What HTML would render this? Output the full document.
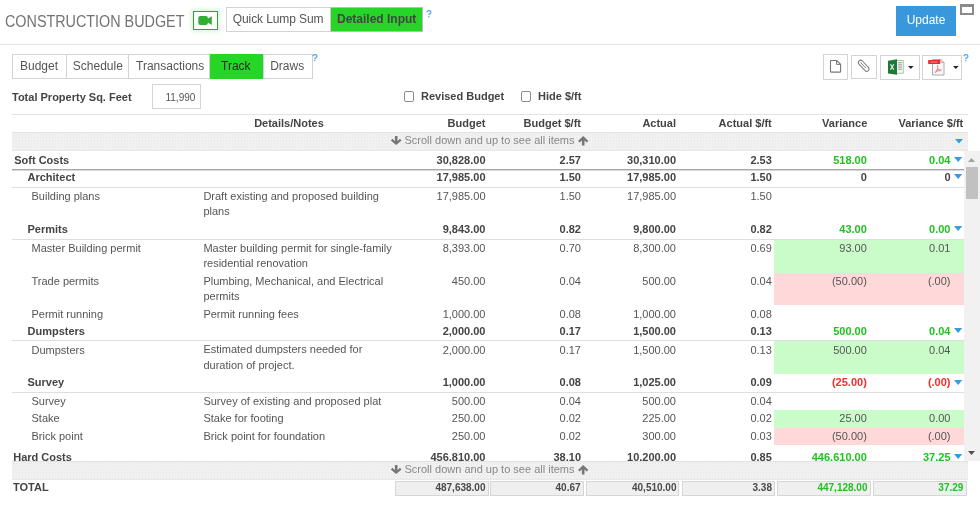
<!DOCTYPE html>
<html><head><meta charset="utf-8"><style>
html,body{margin:0;padding:0;}
body{width:980px;height:509px;position:relative;overflow:hidden;background:#fff;font-family:"Liberation Sans", sans-serif;}
#w{position:absolute;left:0;top:0;width:980px;height:509px;will-change:transform;}
</style></head><body>
<div id="w">
<div style="position:absolute;left:4.8px;top:13.96px;font-size:16px;line-height:16px;font-weight:400;color:#737373;white-space:nowrap;transform:scaleX(0.897);transform-origin:0 0;">CONSTRUCTION BUDGET</div>
<div style="position:absolute;left:193px;top:11px;width:25px;height:19px;box-sizing:border-box;border:1px solid #2ba82b;box-shadow:0 0 4px 2px #dcf7dc;background:#fff;"></div>
<svg style="position:absolute;left:197px;top:15px" width="16" height="12" viewBox="0 0 16 12"><rect x="1.3" y="1" width="9.6" height="9.1" rx="2" fill="#33ad33"/><path d="M10 4 L14.8 1.2 V10 L10 7.1 Z" fill="#33ad33"/></svg>
<div style="position:absolute;left:226px;top:7px;width:197px;height:25px;box-sizing:border-box;border:1px solid #d3d3d3;background:#fff;"></div>
<div style="position:absolute;left:331px;top:7px;width:92px;height:25px;box-sizing:border-box;background:#26d626;border:1px solid #bbb;border-left:none;"></div>
<div style="position:absolute;left:330px;top:7px;width:1px;height:25px;background:#ccc;"></div>
<div style="position:absolute;left:232.8px;top:12.54px;font-size:12px;line-height:12px;font-weight:400;color:#555;white-space:nowrap;letter-spacing:-0.1px;">Quick Lump Sum</div>
<div style="position:absolute;left:337px;top:12.54px;font-size:12px;line-height:12px;font-weight:700;color:#444;white-space:nowrap;">Detailed Input</div>
<svg style="position:absolute;left:425.5px;top:9.6px" width="6" height="8" viewBox="0 0 6 8"><path d="M0.9 2.3 Q1 0.6 2.9 0.6 Q4.9 0.6 4.9 2.2 Q4.9 3.2 3.7 3.9 Q2.8 4.4 2.8 5.2" fill="none" stroke="#5aa9e4" stroke-width="1.3"/><circle cx="2.8" cy="6.7" r="0.8" fill="#5aa9e4"/></svg>
<div style="position:absolute;left:896px;top:6px;width:60px;height:30px;background:#3898db;"></div>
<div style="position:absolute;left:726px;width:400px;text-align:center;top:14.34px;font-size:12px;line-height:12px;font-weight:400;color:#fff;white-space:nowrap;">Update</div>
<div style="position:absolute;left:960px;top:4px;width:14px;height:11px;box-sizing:border-box;border:2px solid #8a8a8a;border-top:3px solid #8a8a8a;"></div>
<div style="position:absolute;left:0px;top:44px;width:980px;height:1px;background:#e6e6e6;"></div>
<div style="position:absolute;left:12px;top:54px;width:301px;height:25px;box-sizing:border-box;border:1px solid #d3d3d3;background:#fff;"></div>
<div style="position:absolute;left:66px;top:54px;width:1px;height:25px;background:#d3d3d3;"></div>
<div style="position:absolute;left:128px;top:54px;width:1px;height:25px;background:#d3d3d3;"></div>
<div style="position:absolute;left:209px;top:54px;width:1px;height:25px;background:#d3d3d3;"></div>
<div style="position:absolute;left:263px;top:54px;width:1px;height:25px;background:#d3d3d3;"></div>
<div style="position:absolute;left:210px;top:54px;width:53px;height:25px;background:#26d626;"></div>
<div style="position:absolute;left:20px;top:59.64px;font-size:12px;line-height:12px;font-weight:400;color:#555;white-space:nowrap;">Budget</div>
<div style="position:absolute;left:72.8px;top:59.64px;font-size:12px;line-height:12px;font-weight:400;color:#555;white-space:nowrap;">Schedule</div>
<div style="position:absolute;left:136px;top:59.64px;font-size:12px;line-height:12px;font-weight:400;color:#555;white-space:nowrap;">Transactions</div>
<div style="position:absolute;left:221px;top:59.64px;font-size:12px;line-height:12px;font-weight:400;color:#2a2a2a;white-space:nowrap;">Track</div>
<div style="position:absolute;left:270.2px;top:59.64px;font-size:12px;line-height:12px;font-weight:400;color:#555;white-space:nowrap;">Draws</div>
<svg style="position:absolute;left:312px;top:53.8px" width="6" height="8" viewBox="0 0 6 8"><path d="M0.9 2.3 Q1 0.6 2.9 0.6 Q4.9 0.6 4.9 2.2 Q4.9 3.2 3.7 3.9 Q2.8 4.4 2.8 5.2" fill="none" stroke="#5aa9e4" stroke-width="1.3"/><circle cx="2.8" cy="6.7" r="0.8" fill="#5aa9e4"/></svg>
<div style="position:absolute;left:823px;top:54px;width:25px;height:26px;box-sizing:border-box;border:1px solid #d3d3d3;background:#fff;"></div>
<div style="position:absolute;left:851px;top:55px;width:26px;height:24px;box-sizing:border-box;border:1px solid #d3d3d3;background:#fff;"></div>
<div style="position:absolute;left:880px;top:55px;width:40px;height:25px;box-sizing:border-box;border:1px solid #d3d3d3;background:#fff;"></div>
<div style="position:absolute;left:922px;top:55px;width:40px;height:25px;box-sizing:border-box;border:1px solid #d3d3d3;background:#fff;"></div>
<svg style="position:absolute;left:829px;top:59px" width="14" height="15" viewBox="0 0 14 15"><path d="M2 1.5 H7.8 L11.6 5.3 V12.6 Q11.6 13.1 11.1 13.1 H2 Q1.5 13.1 1.5 12.6 V2 Q1.5 1.5 2 1.5 Z" fill="none" stroke="#777" stroke-width="1.1"/><path d="M7.6 1.6 V5.4 H11.5" fill="none" stroke="#777" stroke-width="1"/></svg>
<svg style="position:absolute;left:856px;top:58px" width="16" height="16" viewBox="0 0 16 16"><g transform="rotate(47 7.7 7.8)"><rect x="1" y="5.5" width="13.4" height="4.6" rx="2.3" fill="none" stroke="#7a7a7a" stroke-width="1"/><path d="M3 7.8 H11" stroke="#7a7a7a" stroke-width="0.9"/></g></svg>
<svg style="position:absolute;left:887px;top:58px" width="18" height="18" viewBox="0 0 18 18"><rect x="9.5" y="2.5" width="6.8" height="12.8" fill="#f6f6f6" stroke="#9fd09f" stroke-width="1"/><path d="M11.2 4.6h3.6M11.2 6.3h3.6M11.2 8h3.6M11.2 9.7h3.6M11.2 11.4h3.6" stroke="#9a9a9a" stroke-width="0.9"/><path d="M1 2.7 L10 1.2 V16.8 L1 15.4 Z" fill="#1f7a38"/><path d="M3.5 6.2 L6.8 11.6 M6.8 6.2 L3.5 11.6" stroke="#dfe9df" stroke-width="1.2"/></svg>
<svg style="position:absolute;left:907.5px;top:65.8px" width="6" height="3"><path d="M0 0 H5.6 L2.8 3 Z" fill="#222"/></svg>
<svg style="position:absolute;left:927px;top:58px" width="18" height="18" viewBox="0 0 18 18"><path d="M5.5 1.5 H14 L17 4.5 V17 H5.5 Z" fill="#f7f7f7" stroke="#aaa" stroke-width="1"/><path d="M14 1.5 V4.5 H17" fill="none" stroke="#aaa" stroke-width="0.8"/><rect x="1.2" y="2" width="12" height="4" fill="#ee2a2a"/><path d="M3.5 4 h7" stroke="#f3b0b0" stroke-width="0.8"/><path d="M10.2 7 Q11.2 8.5 10.5 11 Q9.6 13.3 7.8 14.6 M10.5 11 Q12.5 12.3 14.6 12.2 M7.8 14.6 Q10.5 12.2 14.6 12.2" fill="none" stroke="#f08a8a" stroke-width="1.1"/></svg>
<svg style="position:absolute;left:953px;top:65.8px" width="6" height="3"><path d="M0 0 H5.6 L2.8 3 Z" fill="#222"/></svg>
<svg style="position:absolute;left:962.5px;top:53.6px" width="6" height="8" viewBox="0 0 6 8"><path d="M0.9 2.3 Q1 0.6 2.9 0.6 Q4.9 0.6 4.9 2.2 Q4.9 3.2 3.7 3.9 Q2.8 4.4 2.8 5.2" fill="none" stroke="#5aa9e4" stroke-width="1.3"/><circle cx="2.8" cy="6.7" r="0.8" fill="#5aa9e4"/></svg>
<div style="position:absolute;left:12px;top:91.69px;font-size:11px;line-height:11px;font-weight:700;color:#444;white-space:nowrap;">Total Property Sq. Feet</div>
<div style="position:absolute;left:152px;top:84px;width:49px;height:25px;box-sizing:border-box;border:1px solid #d4d4d4;background:#fff;"></div>
<div style="position:absolute;left:-204.7px;width:400px;text-align:right;top:92.53px;font-size:10px;line-height:10px;font-weight:400;color:#555;white-space:nowrap;">11,990</div>
<div style="position:absolute;left:404px;top:91px;width:10px;height:11px;box-sizing:border-box;border:1px solid #8c8c8c;border-radius:2px;background:#fff;"></div>
<div style="position:absolute;left:521px;top:91px;width:10px;height:11px;box-sizing:border-box;border:1px solid #8c8c8c;border-radius:2px;background:#fff;"></div>
<div style="position:absolute;left:421px;top:90.69px;font-size:11px;line-height:11px;font-weight:700;color:#444;white-space:nowrap;">Revised Budget</div>
<div style="position:absolute;left:538px;top:90.69px;font-size:11px;line-height:11px;font-weight:700;color:#444;white-space:nowrap;">Hide $/ft</div>
<div style="position:absolute;left:12px;top:114px;width:956px;height:1px;background:#e3e3e3;"></div>
<div style="position:absolute;left:89px;width:400px;text-align:center;top:117.89px;font-size:11px;line-height:11px;font-weight:700;color:#444;white-space:nowrap;">Details/Notes</div>
<div style="position:absolute;left:85.5px;width:400px;text-align:right;top:117.89px;font-size:11px;line-height:11px;font-weight:700;color:#444;white-space:nowrap;">Budget</div>
<div style="position:absolute;left:181px;width:400px;text-align:right;top:117.89px;font-size:11px;line-height:11px;font-weight:700;color:#444;white-space:nowrap;">Budget $/ft</div>
<div style="position:absolute;left:276px;width:400px;text-align:right;top:117.89px;font-size:11px;line-height:11px;font-weight:700;color:#444;white-space:nowrap;">Actual</div>
<div style="position:absolute;left:371.79999999999995px;width:400px;text-align:right;top:117.89px;font-size:11px;line-height:11px;font-weight:700;color:#444;white-space:nowrap;">Actual $/ft</div>
<div style="position:absolute;left:467.29999999999995px;width:400px;text-align:right;top:117.89px;font-size:11px;line-height:11px;font-weight:700;color:#444;white-space:nowrap;">Variance</div>
<div style="position:absolute;left:563.3px;width:400px;text-align:right;top:117.89px;font-size:11px;line-height:11px;font-weight:700;color:#444;white-space:nowrap;">Variance $/ft</div>
<div style="position:absolute;left:12px;top:132px;width:956px;height:19px;background-color:#f6f6f6;background-image:radial-gradient(circle at 1.5px 1.5px,#e6e6e6 0.7px,transparent 1.1px),radial-gradient(circle at 1.5px 1.5px,#e6e6e6 0.7px,transparent 1.1px);background-size:3px 3px,3px 3px;background-position:0 0,1.5px 1.5px;border-top:1px solid #e2e2e2;border-bottom:1px solid #e8e8e8;box-sizing:border-box;"></div>
<svg style="position:absolute;left:390px;top:135px" width="12" height="12" viewBox="0 0 12 12"><path d="M4.9 0.9 H7.5 V6.2 L9.9 3.8 L11.6 5.5 L6.2 10.1 L0.8 5.5 L2.5 3.8 L4.9 6.2 Z" fill="#777"/></svg>
<div style="position:absolute;left:404.5px;top:135.29px;font-size:11px;line-height:11px;font-weight:400;color:#888;white-space:nowrap;">Scroll down and up to see all items</div>
<svg style="position:absolute;left:577px;top:135px" width="12" height="12" viewBox="0 0 12 12"><path d="M6.2 1 L11.4 5.9 L9.7 7.6 L7.5 5.4 V10.6 H4.9 V5.4 L2.7 7.6 L1 5.9 Z" fill="#777"/></svg>
<svg style="position:absolute;left:955px;top:138.5px" width="8" height="5"><path d="M0 0 H8 L4 4.5 Z" fill="#3a9ae0"/></svg>
<div style="position:absolute;left:12px;top:151px;width:968px;height:310px;overflow:hidden"><div style="position:absolute;left:2.1999999999999993px;top:4.20px;font-size:11px;line-height:11px;font-weight:700;color:#444;white-space:nowrap">Soft Costs</div><div style="position:absolute;left:173.5px;width:300px;text-align:right;top:4.20px;font-size:11px;line-height:11px;font-weight:700;color:#444;white-space:nowrap">30,828.00</div><div style="position:absolute;left:269px;width:300px;text-align:right;top:4.20px;font-size:11px;line-height:11px;font-weight:700;color:#444;white-space:nowrap">2.57</div><div style="position:absolute;left:364px;width:300px;text-align:right;top:4.20px;font-size:11px;line-height:11px;font-weight:700;color:#444;white-space:nowrap">30,310.00</div><div style="position:absolute;left:459.79999999999995px;width:300px;text-align:right;top:4.20px;font-size:11px;line-height:11px;font-weight:700;color:#444;white-space:nowrap">2.53</div><div style="position:absolute;left:554.8px;width:300px;text-align:right;top:4.20px;font-size:11px;line-height:11px;font-weight:700;color:#21c121;white-space:nowrap">518.00</div><div style="position:absolute;left:638.5px;width:300px;text-align:right;top:4.20px;font-size:11px;line-height:11px;font-weight:700;color:#21c121;white-space:nowrap">0.04</div><svg style="position:absolute;left:942.2px;top:6.31px" width="9" height="6"><path d="M0 0 H8.3 L4.15 4.9 Z" fill="#3a9ae0"/></svg><div style="position:absolute;left:0;top:18px;width:952px;height:1px;background:#a8a8a8"></div><div style="position:absolute;left:0;top:19px;width:952px;height:1px;background:#d8d8d8"></div><div style="position:absolute;left:15.5px;top:20.60px;font-size:11px;line-height:11px;font-weight:700;color:#444;white-space:nowrap">Architect</div><div style="position:absolute;left:173.5px;width:300px;text-align:right;top:20.60px;font-size:11px;line-height:11px;font-weight:700;color:#444;white-space:nowrap">17,985.00</div><div style="position:absolute;left:269px;width:300px;text-align:right;top:20.60px;font-size:11px;line-height:11px;font-weight:700;color:#444;white-space:nowrap">1.50</div><div style="position:absolute;left:364px;width:300px;text-align:right;top:20.60px;font-size:11px;line-height:11px;font-weight:700;color:#444;white-space:nowrap">17,985.00</div><div style="position:absolute;left:459.79999999999995px;width:300px;text-align:right;top:20.60px;font-size:11px;line-height:11px;font-weight:700;color:#444;white-space:nowrap">1.50</div><div style="position:absolute;left:554.8px;width:300px;text-align:right;top:20.60px;font-size:11px;line-height:11px;font-weight:700;color:#444;white-space:nowrap">0</div><div style="position:absolute;left:638.5px;width:300px;text-align:right;top:20.60px;font-size:11px;line-height:11px;font-weight:700;color:#444;white-space:nowrap">0</div><svg style="position:absolute;left:942.2px;top:22.71px" width="9" height="6"><path d="M0 0 H8.3 L4.15 4.9 Z" fill="#3a9ae0"/></svg><div style="position:absolute;left:0;top:36px;width:952px;height:1px;background:#dedede"></div><div style="position:absolute;left:19.5px;top:40.00px;font-size:11px;line-height:11px;font-weight:400;color:#555;white-space:nowrap">Building plans</div><div style="position:absolute;left:191.4px;top:40.00px;font-size:11px;line-height:15.4px;margin-top:-2.20px;color:#555;white-space:nowrap">Draft existing and proposed building<br>plans</div><div style="position:absolute;left:173.5px;width:300px;text-align:right;top:40.00px;font-size:11px;line-height:11px;font-weight:400;color:#555;white-space:nowrap">17,985.00</div><div style="position:absolute;left:269px;width:300px;text-align:right;top:40.00px;font-size:11px;line-height:11px;font-weight:400;color:#555;white-space:nowrap">1.50</div><div style="position:absolute;left:364px;width:300px;text-align:right;top:40.00px;font-size:11px;line-height:11px;font-weight:400;color:#555;white-space:nowrap">17,985.00</div><div style="position:absolute;left:459.79999999999995px;width:300px;text-align:right;top:40.00px;font-size:11px;line-height:11px;font-weight:400;color:#555;white-space:nowrap">1.50</div><div style="position:absolute;left:554.8px;width:300px;text-align:right;top:40.00px;font-size:11px;line-height:11px;font-weight:400;color:#555;white-space:nowrap"></div><div style="position:absolute;left:638.5px;width:300px;text-align:right;top:40.00px;font-size:11px;line-height:11px;font-weight:400;color:#555;white-space:nowrap"></div><div style="position:absolute;left:15.5px;top:72.80px;font-size:11px;line-height:11px;font-weight:700;color:#444;white-space:nowrap">Permits</div><div style="position:absolute;left:173.5px;width:300px;text-align:right;top:72.80px;font-size:11px;line-height:11px;font-weight:700;color:#444;white-space:nowrap">9,843.00</div><div style="position:absolute;left:269px;width:300px;text-align:right;top:72.80px;font-size:11px;line-height:11px;font-weight:700;color:#444;white-space:nowrap">0.82</div><div style="position:absolute;left:364px;width:300px;text-align:right;top:72.80px;font-size:11px;line-height:11px;font-weight:700;color:#444;white-space:nowrap">9,800.00</div><div style="position:absolute;left:459.79999999999995px;width:300px;text-align:right;top:72.80px;font-size:11px;line-height:11px;font-weight:700;color:#444;white-space:nowrap">0.82</div><div style="position:absolute;left:554.8px;width:300px;text-align:right;top:72.80px;font-size:11px;line-height:11px;font-weight:700;color:#21c121;white-space:nowrap">43.00</div><div style="position:absolute;left:638.5px;width:300px;text-align:right;top:72.80px;font-size:11px;line-height:11px;font-weight:700;color:#21c121;white-space:nowrap">0.00</div><svg style="position:absolute;left:942.2px;top:74.91px" width="9" height="6"><path d="M0 0 H8.3 L4.15 4.9 Z" fill="#3a9ae0"/></svg><div style="position:absolute;left:0;top:88px;width:952px;height:1px;background:#dedede"></div><div style="position:absolute;left:762px;top:89px;width:190px;height:33px;background:#c9fcc9"></div><div style="position:absolute;left:19.5px;top:92.20px;font-size:11px;line-height:11px;font-weight:400;color:#555;white-space:nowrap">Master Building permit</div><div style="position:absolute;left:191.4px;top:92.20px;font-size:11px;line-height:15.4px;margin-top:-2.20px;color:#555;white-space:nowrap">Master building permit for single-family<br>residential renovation</div><div style="position:absolute;left:173.5px;width:300px;text-align:right;top:92.20px;font-size:11px;line-height:11px;font-weight:400;color:#555;white-space:nowrap">8,393.00</div><div style="position:absolute;left:269px;width:300px;text-align:right;top:92.20px;font-size:11px;line-height:11px;font-weight:400;color:#555;white-space:nowrap">0.70</div><div style="position:absolute;left:364px;width:300px;text-align:right;top:92.20px;font-size:11px;line-height:11px;font-weight:400;color:#555;white-space:nowrap">8,300.00</div><div style="position:absolute;left:459.79999999999995px;width:300px;text-align:right;top:92.20px;font-size:11px;line-height:11px;font-weight:400;color:#555;white-space:nowrap">0.69</div><div style="position:absolute;left:554.8px;width:300px;text-align:right;top:92.20px;font-size:11px;line-height:11px;font-weight:400;color:#555;white-space:nowrap">93.00</div><div style="position:absolute;left:638.5px;width:300px;text-align:right;top:92.20px;font-size:11px;line-height:11px;font-weight:400;color:#555;white-space:nowrap">0.01</div><div style="position:absolute;left:762px;top:122px;width:190px;height:32px;background:#ffd9d9"></div><div style="position:absolute;left:19.5px;top:125.00px;font-size:11px;line-height:11px;font-weight:400;color:#555;white-space:nowrap">Trade permits</div><div style="position:absolute;left:191.4px;top:125.00px;font-size:11px;line-height:15.4px;margin-top:-2.20px;color:#555;white-space:nowrap">Plumbing, Mechanical, and Electrical<br>permits</div><div style="position:absolute;left:173.5px;width:300px;text-align:right;top:125.00px;font-size:11px;line-height:11px;font-weight:400;color:#555;white-space:nowrap">450.00</div><div style="position:absolute;left:269px;width:300px;text-align:right;top:125.00px;font-size:11px;line-height:11px;font-weight:400;color:#555;white-space:nowrap">0.04</div><div style="position:absolute;left:364px;width:300px;text-align:right;top:125.00px;font-size:11px;line-height:11px;font-weight:400;color:#555;white-space:nowrap">500.00</div><div style="position:absolute;left:459.79999999999995px;width:300px;text-align:right;top:125.00px;font-size:11px;line-height:11px;font-weight:400;color:#555;white-space:nowrap">0.04</div><div style="position:absolute;left:554.8px;width:300px;text-align:right;top:125.00px;font-size:11px;line-height:11px;font-weight:400;color:#555;white-space:nowrap">(50.00)</div><div style="position:absolute;left:638.5px;width:300px;text-align:right;top:125.00px;font-size:11px;line-height:11px;font-weight:400;color:#555;white-space:nowrap">(.00)</div><div style="position:absolute;left:19.5px;top:157.80px;font-size:11px;line-height:11px;font-weight:400;color:#555;white-space:nowrap">Permit running</div><div style="position:absolute;left:191.4px;top:157.80px;font-size:11px;line-height:15.4px;margin-top:-2.20px;color:#555;white-space:nowrap">Permit running fees</div><div style="position:absolute;left:173.5px;width:300px;text-align:right;top:157.80px;font-size:11px;line-height:11px;font-weight:400;color:#555;white-space:nowrap">1,000.00</div><div style="position:absolute;left:269px;width:300px;text-align:right;top:157.80px;font-size:11px;line-height:11px;font-weight:400;color:#555;white-space:nowrap">0.08</div><div style="position:absolute;left:364px;width:300px;text-align:right;top:157.80px;font-size:11px;line-height:11px;font-weight:400;color:#555;white-space:nowrap">1,000.00</div><div style="position:absolute;left:459.79999999999995px;width:300px;text-align:right;top:157.80px;font-size:11px;line-height:11px;font-weight:400;color:#555;white-space:nowrap">0.08</div><div style="position:absolute;left:554.8px;width:300px;text-align:right;top:157.80px;font-size:11px;line-height:11px;font-weight:400;color:#555;white-space:nowrap"></div><div style="position:absolute;left:638.5px;width:300px;text-align:right;top:157.80px;font-size:11px;line-height:11px;font-weight:400;color:#555;white-space:nowrap"></div><div style="position:absolute;left:15.5px;top:175.20px;font-size:11px;line-height:11px;font-weight:700;color:#444;white-space:nowrap">Dumpsters</div><div style="position:absolute;left:173.5px;width:300px;text-align:right;top:175.20px;font-size:11px;line-height:11px;font-weight:700;color:#444;white-space:nowrap">2,000.00</div><div style="position:absolute;left:269px;width:300px;text-align:right;top:175.20px;font-size:11px;line-height:11px;font-weight:700;color:#444;white-space:nowrap">0.17</div><div style="position:absolute;left:364px;width:300px;text-align:right;top:175.20px;font-size:11px;line-height:11px;font-weight:700;color:#444;white-space:nowrap">1,500.00</div><div style="position:absolute;left:459.79999999999995px;width:300px;text-align:right;top:175.20px;font-size:11px;line-height:11px;font-weight:700;color:#444;white-space:nowrap">0.13</div><div style="position:absolute;left:554.8px;width:300px;text-align:right;top:175.20px;font-size:11px;line-height:11px;font-weight:700;color:#21c121;white-space:nowrap">500.00</div><div style="position:absolute;left:638.5px;width:300px;text-align:right;top:175.20px;font-size:11px;line-height:11px;font-weight:700;color:#21c121;white-space:nowrap">0.04</div><svg style="position:absolute;left:942.2px;top:177.31px" width="9" height="6"><path d="M0 0 H8.3 L4.15 4.9 Z" fill="#3a9ae0"/></svg><div style="position:absolute;left:0;top:189px;width:952px;height:1px;background:#dedede"></div><div style="position:absolute;left:762px;top:190px;width:190px;height:33px;background:#c9fcc9"></div><div style="position:absolute;left:19.5px;top:193.60px;font-size:11px;line-height:11px;font-weight:400;color:#555;white-space:nowrap">Dumpsters</div><div style="position:absolute;left:191.4px;top:193.60px;font-size:11px;line-height:15.4px;margin-top:-2.20px;color:#555;white-space:nowrap">Estimated dumpsters needed for<br>duration of project.</div><div style="position:absolute;left:173.5px;width:300px;text-align:right;top:193.60px;font-size:11px;line-height:11px;font-weight:400;color:#555;white-space:nowrap">2,000.00</div><div style="position:absolute;left:269px;width:300px;text-align:right;top:193.60px;font-size:11px;line-height:11px;font-weight:400;color:#555;white-space:nowrap">0.17</div><div style="position:absolute;left:364px;width:300px;text-align:right;top:193.60px;font-size:11px;line-height:11px;font-weight:400;color:#555;white-space:nowrap">1,500.00</div><div style="position:absolute;left:459.79999999999995px;width:300px;text-align:right;top:193.60px;font-size:11px;line-height:11px;font-weight:400;color:#555;white-space:nowrap">0.13</div><div style="position:absolute;left:554.8px;width:300px;text-align:right;top:193.60px;font-size:11px;line-height:11px;font-weight:400;color:#555;white-space:nowrap">500.00</div><div style="position:absolute;left:638.5px;width:300px;text-align:right;top:193.60px;font-size:11px;line-height:11px;font-weight:400;color:#555;white-space:nowrap">0.04</div><div style="position:absolute;left:15.5px;top:226.40px;font-size:11px;line-height:11px;font-weight:700;color:#444;white-space:nowrap">Survey</div><div style="position:absolute;left:173.5px;width:300px;text-align:right;top:226.40px;font-size:11px;line-height:11px;font-weight:700;color:#444;white-space:nowrap">1,000.00</div><div style="position:absolute;left:269px;width:300px;text-align:right;top:226.40px;font-size:11px;line-height:11px;font-weight:700;color:#444;white-space:nowrap">0.08</div><div style="position:absolute;left:364px;width:300px;text-align:right;top:226.40px;font-size:11px;line-height:11px;font-weight:700;color:#444;white-space:nowrap">1,025.00</div><div style="position:absolute;left:459.79999999999995px;width:300px;text-align:right;top:226.40px;font-size:11px;line-height:11px;font-weight:700;color:#444;white-space:nowrap">0.09</div><div style="position:absolute;left:554.8px;width:300px;text-align:right;top:226.40px;font-size:11px;line-height:11px;font-weight:700;color:#f52c2c;white-space:nowrap">(25.00)</div><div style="position:absolute;left:638.5px;width:300px;text-align:right;top:226.40px;font-size:11px;line-height:11px;font-weight:700;color:#f52c2c;white-space:nowrap">(.00)</div><svg style="position:absolute;left:942.2px;top:228.51px" width="9" height="6"><path d="M0 0 H8.3 L4.15 4.9 Z" fill="#3a9ae0"/></svg><div style="position:absolute;left:0;top:241px;width:952px;height:1px;background:#dedede"></div><div style="position:absolute;left:19.5px;top:245.30px;font-size:11px;line-height:11px;font-weight:400;color:#555;white-space:nowrap">Survey</div><div style="position:absolute;left:191.4px;top:245.30px;font-size:11px;line-height:15.4px;margin-top:-2.20px;color:#555;white-space:nowrap">Survey of existing and proposed plat</div><div style="position:absolute;left:173.5px;width:300px;text-align:right;top:245.30px;font-size:11px;line-height:11px;font-weight:400;color:#555;white-space:nowrap">500.00</div><div style="position:absolute;left:269px;width:300px;text-align:right;top:245.30px;font-size:11px;line-height:11px;font-weight:400;color:#555;white-space:nowrap">0.04</div><div style="position:absolute;left:364px;width:300px;text-align:right;top:245.30px;font-size:11px;line-height:11px;font-weight:400;color:#555;white-space:nowrap">500.00</div><div style="position:absolute;left:459.79999999999995px;width:300px;text-align:right;top:245.30px;font-size:11px;line-height:11px;font-weight:400;color:#555;white-space:nowrap">0.04</div><div style="position:absolute;left:554.8px;width:300px;text-align:right;top:245.30px;font-size:11px;line-height:11px;font-weight:400;color:#555;white-space:nowrap"></div><div style="position:absolute;left:638.5px;width:300px;text-align:right;top:245.30px;font-size:11px;line-height:11px;font-weight:400;color:#555;white-space:nowrap"></div><div style="position:absolute;left:762px;top:259px;width:190px;height:18px;background:#c9fcc9"></div><div style="position:absolute;left:19.5px;top:262.20px;font-size:11px;line-height:11px;font-weight:400;color:#555;white-space:nowrap">Stake</div><div style="position:absolute;left:191.4px;top:262.20px;font-size:11px;line-height:15.4px;margin-top:-2.20px;color:#555;white-space:nowrap">Stake for footing</div><div style="position:absolute;left:173.5px;width:300px;text-align:right;top:262.20px;font-size:11px;line-height:11px;font-weight:400;color:#555;white-space:nowrap">250.00</div><div style="position:absolute;left:269px;width:300px;text-align:right;top:262.20px;font-size:11px;line-height:11px;font-weight:400;color:#555;white-space:nowrap">0.02</div><div style="position:absolute;left:364px;width:300px;text-align:right;top:262.20px;font-size:11px;line-height:11px;font-weight:400;color:#555;white-space:nowrap">225.00</div><div style="position:absolute;left:459.79999999999995px;width:300px;text-align:right;top:262.20px;font-size:11px;line-height:11px;font-weight:400;color:#555;white-space:nowrap">0.02</div><div style="position:absolute;left:554.8px;width:300px;text-align:right;top:262.20px;font-size:11px;line-height:11px;font-weight:400;color:#555;white-space:nowrap">25.00</div><div style="position:absolute;left:638.5px;width:300px;text-align:right;top:262.20px;font-size:11px;line-height:11px;font-weight:400;color:#555;white-space:nowrap">0.00</div><div style="position:absolute;left:762px;top:277px;width:190px;height:17px;background:#ffd9d9"></div><div style="position:absolute;left:19.5px;top:280.10px;font-size:11px;line-height:11px;font-weight:400;color:#555;white-space:nowrap">Brick point</div><div style="position:absolute;left:191.4px;top:280.10px;font-size:11px;line-height:15.4px;margin-top:-2.20px;color:#555;white-space:nowrap">Brick point for foundation</div><div style="position:absolute;left:173.5px;width:300px;text-align:right;top:280.10px;font-size:11px;line-height:11px;font-weight:400;color:#555;white-space:nowrap">250.00</div><div style="position:absolute;left:269px;width:300px;text-align:right;top:280.10px;font-size:11px;line-height:11px;font-weight:400;color:#555;white-space:nowrap">0.02</div><div style="position:absolute;left:364px;width:300px;text-align:right;top:280.10px;font-size:11px;line-height:11px;font-weight:400;color:#555;white-space:nowrap">300.00</div><div style="position:absolute;left:459.79999999999995px;width:300px;text-align:right;top:280.10px;font-size:11px;line-height:11px;font-weight:400;color:#555;white-space:nowrap">0.03</div><div style="position:absolute;left:554.8px;width:300px;text-align:right;top:280.10px;font-size:11px;line-height:11px;font-weight:400;color:#555;white-space:nowrap">(50.00)</div><div style="position:absolute;left:638.5px;width:300px;text-align:right;top:280.10px;font-size:11px;line-height:11px;font-weight:400;color:#555;white-space:nowrap">(.00)</div><div style="position:absolute;left:1.1999999999999993px;top:301.00px;font-size:11px;line-height:11px;font-weight:700;color:#444;white-space:nowrap">Hard Costs</div><div style="position:absolute;left:173.5px;width:300px;text-align:right;top:301.00px;font-size:11px;line-height:11px;font-weight:700;color:#444;white-space:nowrap">456,810.00</div><div style="position:absolute;left:269px;width:300px;text-align:right;top:301.00px;font-size:11px;line-height:11px;font-weight:700;color:#444;white-space:nowrap">38.10</div><div style="position:absolute;left:364px;width:300px;text-align:right;top:301.00px;font-size:11px;line-height:11px;font-weight:700;color:#444;white-space:nowrap">10,200.00</div><div style="position:absolute;left:459.79999999999995px;width:300px;text-align:right;top:301.00px;font-size:11px;line-height:11px;font-weight:700;color:#444;white-space:nowrap">0.85</div><div style="position:absolute;left:554.8px;width:300px;text-align:right;top:301.00px;font-size:11px;line-height:11px;font-weight:700;color:#21c121;white-space:nowrap">446,610.00</div><div style="position:absolute;left:638.5px;width:300px;text-align:right;top:301.00px;font-size:11px;line-height:11px;font-weight:700;color:#21c121;white-space:nowrap">37.25</div><svg style="position:absolute;left:942.2px;top:303.11px" width="9" height="6"><path d="M0 0 H8.3 L4.15 4.9 Z" fill="#3a9ae0"/></svg><div style="position:absolute;left:952px;top:0;width:16px;height:310px;background:#f1f1f1"></div><div style="position:absolute;left:954px;top:16px;width:12px;height:32px;background:#c1c1c1"></div><svg style="position:absolute;left:956px;top:7px" width="8" height="4"><path d="M0 4 H7 L3.5 0 Z" fill="#a3a3a3"/></svg><svg style="position:absolute;left:956px;top:300px" width="8" height="4"><path d="M0 0 H7 L3.5 4 Z" fill="#505050"/></svg></div>
<div style="position:absolute;left:12px;top:461px;width:956px;height:19px;background-color:#f6f6f6;background-image:radial-gradient(circle at 1.5px 1.5px,#e6e6e6 0.7px,transparent 1.1px),radial-gradient(circle at 1.5px 1.5px,#e6e6e6 0.7px,transparent 1.1px);background-size:3px 3px,3px 3px;background-position:0 0,1.5px 1.5px;border-top:1px solid #e2e2e2;border-bottom:1px solid #e8e8e8;box-sizing:border-box;"></div>
<svg style="position:absolute;left:390px;top:464px" width="12" height="12" viewBox="0 0 12 12"><path d="M4.9 0.9 H7.5 V6.2 L9.9 3.8 L11.6 5.5 L6.2 10.1 L0.8 5.5 L2.5 3.8 L4.9 6.2 Z" fill="#777"/></svg>
<div style="position:absolute;left:404.5px;top:464.39px;font-size:11px;line-height:11px;font-weight:400;color:#888;white-space:nowrap;">Scroll down and up to see all items</div>
<svg style="position:absolute;left:577px;top:464px" width="12" height="12" viewBox="0 0 12 12"><path d="M6.2 1 L11.4 5.9 L9.7 7.6 L7.5 5.4 V10.6 H4.9 V5.4 L2.7 7.6 L1 5.9 Z" fill="#777"/></svg>
<div style="position:absolute;left:13px;top:482.49px;font-size:11px;line-height:11px;font-weight:700;color:#444;white-space:nowrap;">TOTAL</div>
<div style="position:absolute;left:395px;top:481px;width:94px;height:15px;box-sizing:border-box;border:1px solid #d6d6d6;background:#efefef;"></div>
<div style="position:absolute;left:85.5px;width:400px;text-align:right;top:483.04px;font-size:10px;line-height:10px;font-weight:700;color:#4a4a4a;white-space:nowrap;">487,638.00</div>
<div style="position:absolute;left:490px;top:481px;width:94px;height:15px;box-sizing:border-box;border:1px solid #d6d6d6;background:#efefef;"></div>
<div style="position:absolute;left:180.60000000000002px;width:400px;text-align:right;top:483.04px;font-size:10px;line-height:10px;font-weight:700;color:#4a4a4a;white-space:nowrap;">40.67</div>
<div style="position:absolute;left:586px;top:481px;width:93px;height:15px;box-sizing:border-box;border:1px solid #d6d6d6;background:#efefef;"></div>
<div style="position:absolute;left:276.5px;width:400px;text-align:right;top:483.04px;font-size:10px;line-height:10px;font-weight:700;color:#4a4a4a;white-space:nowrap;">40,510.00</div>
<div style="position:absolute;left:682px;top:481px;width:93px;height:15px;box-sizing:border-box;border:1px solid #d6d6d6;background:#efefef;"></div>
<div style="position:absolute;left:372px;width:400px;text-align:right;top:483.04px;font-size:10px;line-height:10px;font-weight:700;color:#4a4a4a;white-space:nowrap;">3.38</div>
<div style="position:absolute;left:777px;top:481px;width:94px;height:15px;box-sizing:border-box;border:1px solid #d6d6d6;background:#efefef;"></div>
<div style="position:absolute;left:467.5px;width:400px;text-align:right;top:483.04px;font-size:10px;line-height:10px;font-weight:700;color:#21c121;white-space:nowrap;">447,128.00</div>
<div style="position:absolute;left:873px;top:481px;width:94px;height:15px;box-sizing:border-box;border:1px solid #d6d6d6;background:#efefef;"></div>
<div style="position:absolute;left:563.4px;width:400px;text-align:right;top:483.04px;font-size:10px;line-height:10px;font-weight:700;color:#21c121;white-space:nowrap;">37.29</div>
</div>
</body></html>
